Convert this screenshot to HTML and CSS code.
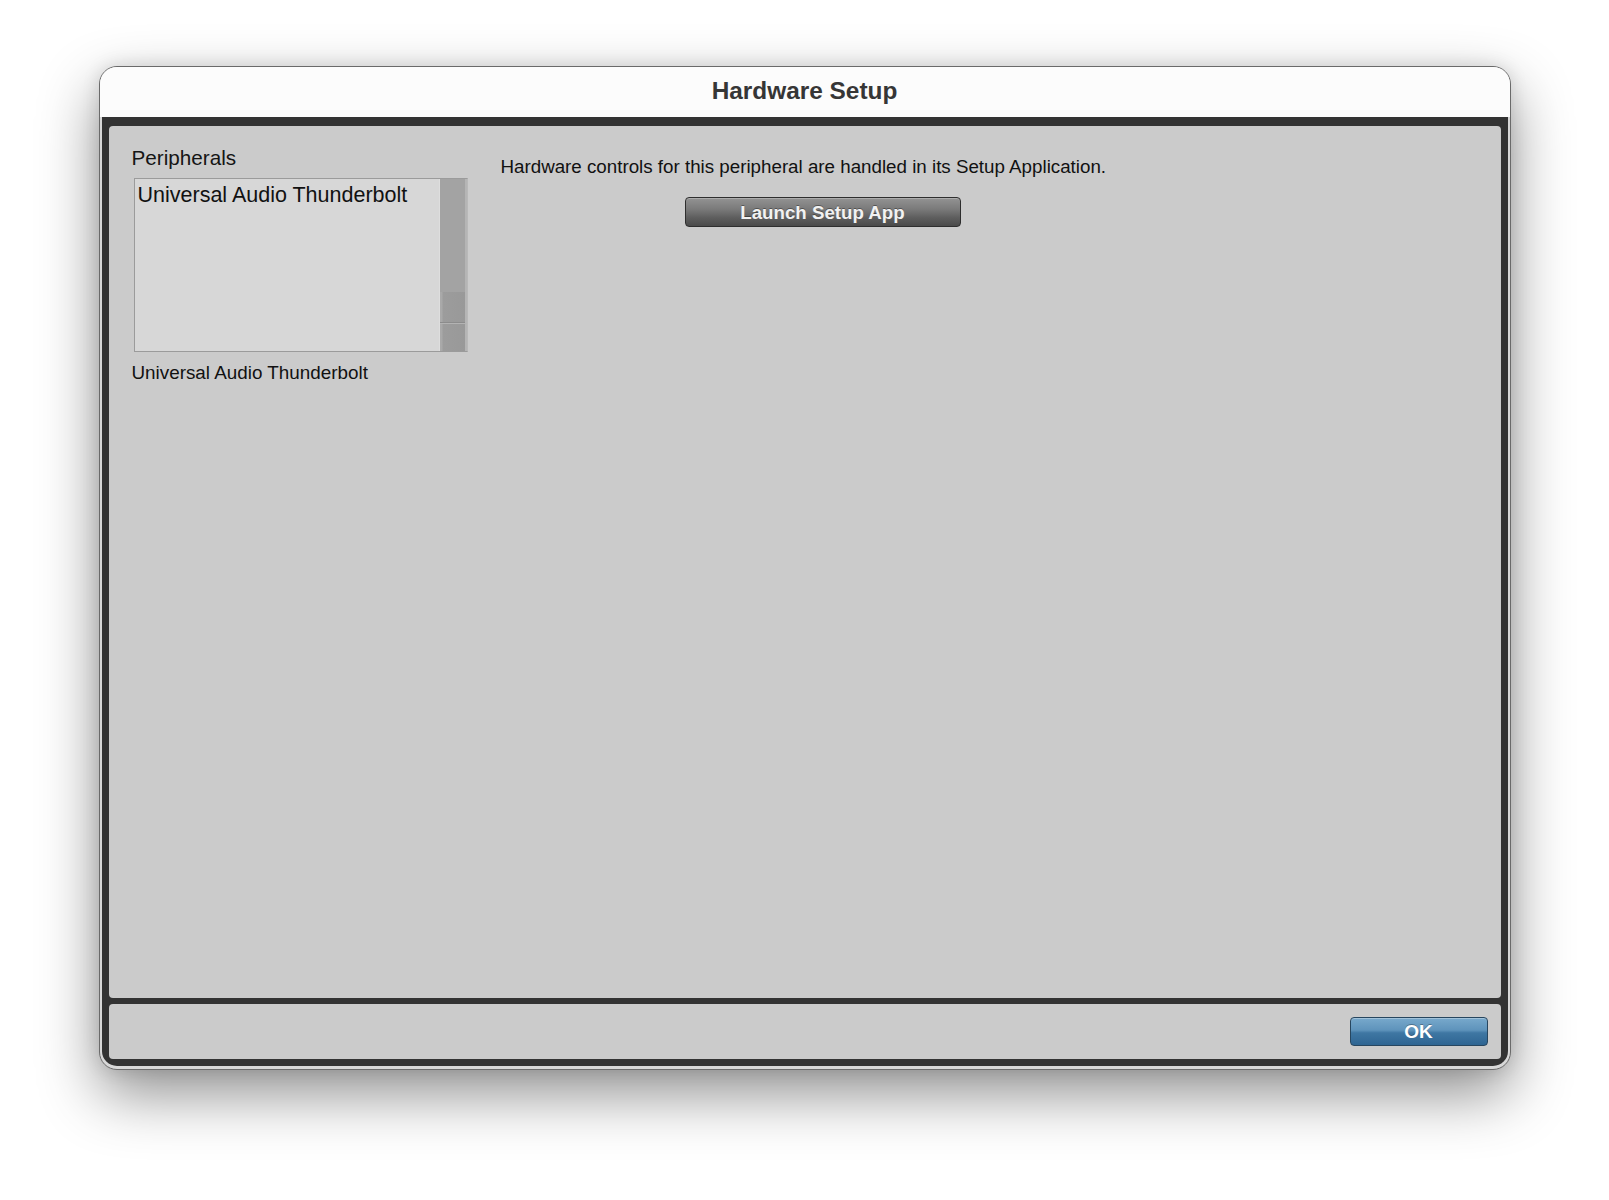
FILE: index.html
```html
<!DOCTYPE html>
<html lang="en">
<head>
<meta charset="utf-8">
<title>Hardware Setup</title>
<link rel="stylesheet" href="styles.css">
</head>
<body>
<div class="window">
  <div class="titlebar">Hardware Setup</div>
  <div class="frame">
    <div class="panel">
      <div class="left-col">
        <div class="label-peripherals">Peripherals</div>
        <div class="listbox">
          <div class="list-items">
            <div class="list-item">Universal Audio Thunderbolt</div>
          </div>
          <div class="scrollbar">
            <div class="track"></div>
            <div class="sb-btn sb-btn-up"></div>
            <div class="sb-sep"></div>
            <div class="sb-btn sb-btn-down"></div>
          </div>
        </div>
        <div class="selected-name">Universal Audio Thunderbolt</div>
      </div>
      <div class="right-col">
        <div class="description">Hardware controls for this peripheral are handled in its Setup Application.</div>
        <button class="btn-launch">Launch Setup App</button>
      </div>
    </div>
    <div class="footer">
      <button class="btn-ok">OK</button>
    </div>
  </div>
</div>
</body>
</html>
```

FILE: styles.css
```css
html, body {
  margin: 0;
  padding: 0;
  background: #ffffff;
}

body {
  font-family: "Liberation Sans", Arial, Helvetica, sans-serif;
  color: #111111;
  padding-top: 66px;
  height: 1200px;
  box-sizing: border-box;
}

.window {
  width: 1412px;
  height: 1004px;
  margin: 0 auto;
  box-sizing: border-box;
  border: 1px solid #6a6a6a;
  border-radius: 18px;
  background: #d8d8d8;
  overflow: hidden;
  display: flex;
  flex-direction: column;
  box-shadow: 0 24px 60px rgba(0, 0, 0, 0.44), 0 0 18px rgba(0, 0, 0, 0.12);
}

.titlebar {
  height: 50px;
  flex: 0 0 50px;
  box-sizing: border-box;
  background: #fcfcfc;
  text-align: center;
  font-weight: bold;
  font-size: 24.4px;
  line-height: 48px;
  color: #363636;
  padding-bottom: 2px;
}

.frame {
  flex: 1;
  margin: 0 2px 3px 2px;
  background: #333333;
  border-radius: 0 0 15px 15px;
  padding: 9px 7px 7px 7px;
  display: flex;
  flex-direction: column;
  gap: 6px;
}

.panel {
  flex: 1;
  background: #cbcbcb;
  border-radius: 4px;
  display: grid;
  grid-template-columns: 337px 1fr;
  column-gap: 32px;
  align-content: start;
  padding: 20px 0 0 23px;
}

.label-peripherals {
  font-size: 20.7px;
  line-height: 24px;
  color: #151515;
}

.listbox {
  margin: 8px 0 0 2px;
  width: 334px;
  height: 174px;
  box-sizing: border-box;
  border: 1px solid #9b9b9b;
  border-right-color: #b9b9b9;
  display: flex;
}

.list-items {
  flex: 1;
  background: #d7d7d7;
  padding: 3px 0 0 3px;
  border-right: 1px solid #dedede;
}

.list-item {
  font-size: 21.5px;
  line-height: 27px;
  color: #111111;
}

.scrollbar {
  width: 25px;
  border-right: 2px solid #b5b5b5;
  display: flex;
  flex-direction: column;
  background: #a3a3a3;
}

.track {
  flex: 1;
  background: #a3a3a3;
}

.sb-btn {
  background: linear-gradient(to right, #a9a9a9 0, #a9a9a9 2px, #9c9c9c 3px, #999999 100%);
}

.sb-btn-up {
  height: 30px;
}

.sb-sep {
  height: 1px;
  background: #8c8c8c;
  border-bottom: 1px solid #b3b3b3;
}

.sb-btn-down {
  height: 27px;
}

.selected-name {
  margin-top: 10px;
  font-size: 18.85px;
  line-height: 22px;
  color: #111111;
}

.right-col {
  padding-top: 10px;
  display: flex;
  flex-direction: column;
  align-items: flex-start;
}

.description {
  font-size: 18.75px;
  line-height: 22px;
  color: #111111;
}

.btn-launch {
  margin: 19px 0 0 184px;
  width: 276px;
  height: 30px;
  box-sizing: border-box;
  border: 1px solid #2e2e2e;
  border-radius: 4px;
  background: linear-gradient(to bottom, #939393 0%, #7a7a7a 40%, #5e5e5e 70%, #4a4a4a 100%);
  color: #f2f2f2;
  font-family: "Liberation Sans", Arial, Helvetica, sans-serif;
  font-weight: bold;
  font-size: 18.7px;
  line-height: 29px;
  padding: 0;
  text-shadow: 0 -1px 0 rgba(0, 0, 0, 0.35);
  box-shadow: inset 0 1px 0 rgba(255, 255, 255, 0.25);
}

.footer {
  flex: 0 0 55px;
  height: 55px;
  box-sizing: border-box;
  background: #cbcbcb;
  border-radius: 4px;
  display: flex;
  justify-content: flex-end;
  align-items: flex-start;
  padding: 13px 13px 0 0;
}

.btn-ok {
  width: 138px;
  height: 29px;
  box-sizing: border-box;
  border: 1px solid #27465f;
  border-radius: 4px;
  background: linear-gradient(to bottom, #78a9cc 0%, #5e93bb 45%, #3f77a3 55%, #2e6592 100%);
  color: #ffffff;
  font-family: "Liberation Sans", Arial, Helvetica, sans-serif;
  font-weight: bold;
  font-size: 19px;
  line-height: 28px;
  padding: 0;
  text-shadow: 0 -1px 0 rgba(0, 0, 0, 0.3);
  box-shadow: inset 0 1px 0 rgba(255, 255, 255, 0.3);
}
```
